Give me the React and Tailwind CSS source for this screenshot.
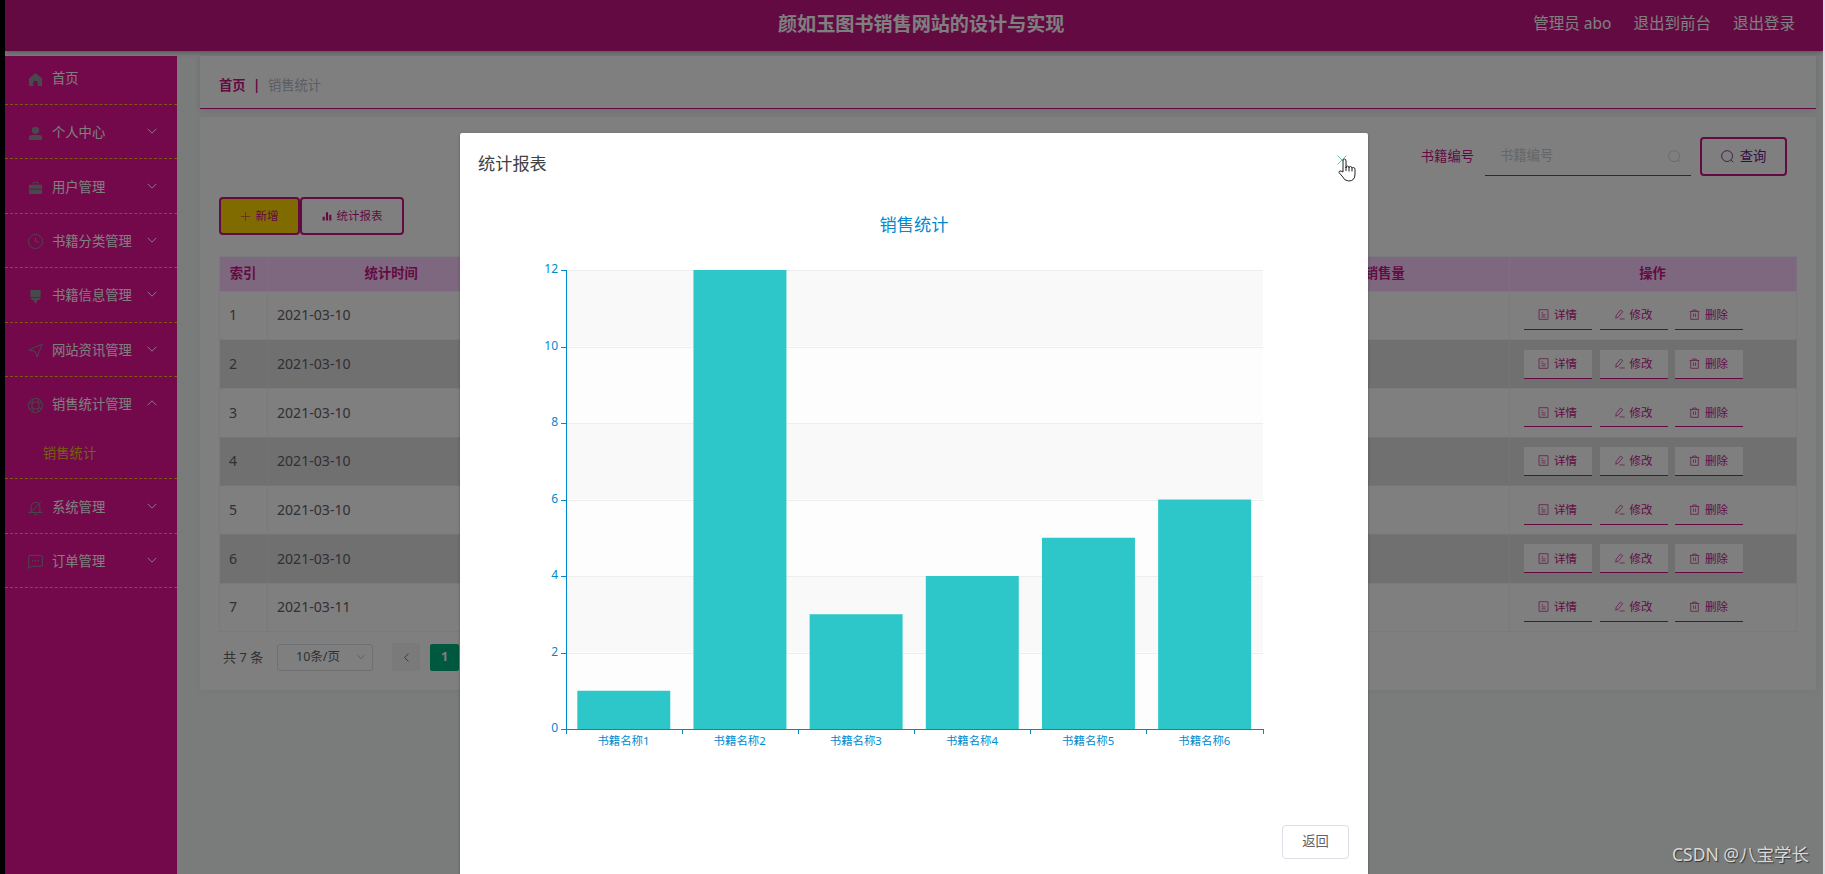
// App.jsx
import React, { useState } from 'react'

const svgProps = { viewBox: '0 0 16 16', fill: 'none', stroke: 'currentColor', strokeWidth: 1 }

const icons = {
  home: <path d="M8 1 15 7v8h-4.6v-3.4a2.4 2.4 0 0 0-4.8 0V15H1V7z" fill="currentColor" stroke="none" />,
  user: (
    <g fill="currentColor" stroke="none">
      <circle cx="8" cy="4.6" r="3.9" />
      <path d="M1 15v-2.6Q1 9.6 4 9.6h8q3 0 3 2.8V15z" />
    </g>
  ),
  box: (
    <g>
      <path d="M5.5 5V2.5h5V5" />
      <path d="M1 5h14v4.300H1zM1 10.200h14V15H1z" fill="currentColor" stroke="none" />
    </g>
  ),
  clock: (
    <g>
      <circle cx="8" cy="8" r="7.5" />
      <path d="M8 4v4.5h4" />
    </g>
  ),
  brush: (
    <g fill="currentColor" stroke="none">
      <path d="M2.500 1h11v7.500h-11zM2.500 9.300h11Q13 12 10 12l-2 4-2-4Q3 12 2.500 9.300z" />
    </g>
  ),
  send: <path d="M15 1 .8 7.500l6.600 1.300L9.800 15z" />,
  ring: (
    <g>
      <circle cx="8" cy="8" r="7.500" />
      <circle cx="8" cy="8" r="4" />
      <path d="M5.500 4.800 4.800 1.200M10.500 4.800l.7-3.600M5.500 11.200l-.7 3.600M10.500 11.200l.7 3.600M4.800 5.500 1.200 4.800M11.200 5.500l3.600-.7M4.800 10.500l-3.600.7M11.200 10.500l3.600.7" />
    </g>
  ),
  bell: <path d="M3.300 13V7.200a4.700 4.700 0 0 1 9.400 0V13M.5 13.300h15M6.500 15.500h3M2 14.500 14 1.500" />,
  chat: (
    <g>
      <path d="M2 1.500h12q1.300 0 1.300 1.300v9q0 1.300-1.300 1.300H4L.7 15.300V2.800Q.7 1.500 2 1.500z" />
      <path d="M4.300 7.300h1.400M7.300 7.300h1.400M10.300 7.300h1.400" strokeWidth="1.500" />
    </g>
  ),
  doc: <path d="M1.500 1h13v14h-13zM5 5.500h2.500M5 8.500h6M5 11.500h6" />,
  edit: <path d="m2.500 13.500.8-4.500L9.500 1.500l3.200 2.300-6.200 7.700zM8 14.500h7.500" />,
  trash: <path d="M1 3.500h14M5.500 3.500v-2h5v2M2.500 3.500V15h11V3.500M6.500 6.500v5M9.500 6.500v5" />,
  search: (
    <g>
      <circle cx="7.500" cy="7.500" r="6.700" />
      <path d="m12.200 12.200 3 3" />
    </g>
  ),
  plus: <path d="M8 0v16M0 8h16" />,
  bars: <path d="M1 9h3.400v6H1zM6.300 2h3.400v13H6.300zM11.600 6H15v9h-3.400z" fill="currentColor" stroke="none" />,
  down: <path d="m1 4.500 7 7 7-7" />,
  up: <path d="m1 11.500 7-7 7 7" />,
  left: <path d="m11.500 1-7 7 7 7" />,
  close: <path d="m1 1 14 14M15 1 1 15" />,
}

function Icon({ name, className }) {
  return (
    <svg {...svgProps} className={className}>
      {icons[name]}
    </svg>
  )
}

const menu = [
  { icon: 'user', label: '个人中心' },
  { icon: 'box', label: '用户管理' },
  { icon: 'clock', label: '书籍分类管理' },
  { icon: 'brush', label: '书籍信息管理' },
  { icon: 'send', label: '网站资讯管理' },
  { icon: 'ring', label: '销售统计管理', children: ['销售统计'] },
  { icon: 'bell', label: '系统管理' },
  { icon: 'chat', label: '订单管理' },
]

const rows = ['2021-03-10', '2021-03-10', '2021-03-10', '2021-03-10', '2021-03-10', '2021-03-10', '2021-03-11']

const actions = [
  { icon: 'doc', label: '详情' },
  { icon: 'edit', label: '修改' },
  { icon: 'trash', label: '删除' },
]

const sales = [
  { name: '书籍名称1', value: 1 },
  { name: '书籍名称2', value: 12 },
  { name: '书籍名称3', value: 3 },
  { name: '书籍名称4', value: 4 },
  { name: '书籍名称5', value: 5 },
  { name: '书籍名称6', value: 6 },
]

function Header() {
  return (
    <header className="relative flex h-[51px] shrink-0 items-center bg-[#c71585] pb-[3px] text-white shadow-[0_1px_5px_rgba(0,0,0,0.35)]">
      <div className="w-[773px]" />
      <h1 className="text-[19.1px] font-bold">颜如玉图书销售网站的设计与实现</h1>
      <div className="flex flex-1 justify-end gap-[22px] pr-7 text-[15.5px]">
        <span>管理员 abo</span>
        <span>退出到前台</span>
        <span>退出登录</span>
      </div>
    </header>
  )
}

function Sidebar({ open }) {
  return (
    <aside className="w-[172px] shrink-0 bg-[#e61294] text-[13.3px] text-white">
      <div className="flex h-[49px] items-center border-b border-dashed border-[#ffb020] pb-[3px] pl-[23px]">
        <Icon name="home" className="mt-0.5 size-[15px] text-[#909399]" />
        <span className="ml-[9px]">首页</span>
      </div>
      {menu.map((item) => (
        <div key={item.label} className="border-b border-dashed border-[#ffb020]">
          <div className="flex h-[53.4px] items-center pt-[3px] pr-[20px] pl-[23px]">
            <Icon name={item.icon} className="size-[15px] text-[#909399]" />
            <span className="ml-[9px] flex-1">{item.label}</span>
            <Icon name={item.label === open ? 'up' : 'down'} className="mb-1 size-[10px] [stroke-width:1.6]" />
          </div>
          {item.children?.map((child) => (
            <div key={child} className="flex h-[48px] items-center pl-[38px] text-[#e8c020]">
              {child}
            </div>
          ))}
        </div>
      ))}
    </aside>
  )
}

function Toolbar() {
  return (
    <>
      <div className="flex items-center justify-end pr-[10px] text-[13.3px]">
        <span className="text-[#c71585]">书籍编号</span>
        <div className="ml-[11px] flex h-[39px] w-[206px] items-center justify-between border-b border-[#c71585] pr-[10px] pl-[15px] text-[#c8cdd2]">
          <span>书籍编号</span>
          <Icon name="search" className="size-[13px]" />
        </div>
        <button className="ml-[9px] flex h-[39px] w-[87px] items-center justify-center gap-1.5 rounded-[4px] border-2 border-[#c71585] text-[#6a148c]">
          <Icon name="search" className="size-[13px]" />
          查询
        </button>
      </div>
      <div className="mt-[21px] flex text-[11.5px] text-[#c71585]">
        <button className="flex h-[38px] w-[81px] items-center justify-center gap-1.5 rounded-[4px] border-2 border-[#c71585] bg-[#ffd700]">
          <Icon name="plus" className="size-[9px]" />
          新增
        </button>
        <button className="flex h-[38px] w-[104px] items-center justify-center gap-[5px] rounded-[4px] border-2 border-[#c71585]">
          <Icon name="bars" className="size-[10px]" />
          统计报表
        </button>
      </div>
    </>
  )
}

function SalesTable() {
  return (
    <table className="mt-[21px] w-full table-fixed border-collapse text-left text-[14.100px] text-[#606266]">
      <colgroup>
        <col className="w-[48px]" />
        <col />
        <col />
        <col />
        <col />
        <col />
        <col className="w-[287px]" />
      </colgroup>
      <thead>
        <tr className="h-[34.500px] bg-[#fdd0ff] text-[13.3px] text-[#c71585]">
          {['索引', '统计时间', '', '', '', '销售量', '操作'].map((title, i) => (
            <th key={i} className="border border-[#ebeef5]/60 p-0 pt-px pr-px text-center font-bold">
              {title}
            </th>
          ))}
        </tr>
      </thead>
      <tbody>
        {rows.map((date, i) => (
          <tr key={i} className={`h-[48.7px] ${i % 2 ? 'bg-[#e0e0e0]' : ''}`}>
            <td className="border border-[#ebeef5]/60 p-0 pb-px pl-[9px]">{i + 1}</td>
            <td className="border border-[#ebeef5]/60 p-0 pb-px pl-[9px]">{date}</td>
            <td />
            <td />
            <td />
            <td className="border border-[#ebeef5]/60" />
            <td className="border border-[#ebeef5]/60 p-0 pl-[14px]">
              <div className="flex gap-[7.5px]">
                {actions.map((action) => (
                  <button
                    key={action.label}
                    className="flex h-[29px] w-[68px] items-center justify-center gap-[5px] border-b border-[#c71585] bg-white pr-px text-[11.5px] text-[#c71585]"
                  >
                    <Icon name={action.icon} className="size-[11px]" />
                    {action.label}
                  </button>
                ))}
              </div>
            </td>
          </tr>
        ))}
      </tbody>
    </table>
  )
}

function Pagination() {
  return (
    <div className="mt-[11.500px] flex h-[27px] items-center pl-1 text-[12.5px] text-[#606266]">
      <span className="w-[54px] text-[13px]">共 7 条</span>
      <div className="flex h-[27px] w-[96px] items-center justify-between rounded-[3px] border border-[#dcdfe6] pr-[7px] pl-[18px]">
        10条/页
        <Icon name="down" className="size-[8px] text-[#a0a4aa] [stroke-width:1.5]" />
      </div>
      <div className="ml-[19px] flex size-[28px] items-center justify-center rounded-[2px] bg-[#f4f4f5]">
        <Icon name="left" className="size-[9px] [stroke-width:1.5]" />
      </div>
      <div className="ml-[10px] flex h-[27px] w-[29px] items-center justify-center rounded-[2px] bg-[#00b37e] font-bold text-white">1</div>
    </div>
  )
}

function BarChart() {
  const top = 137
  const bottom = 596
  const left = 106
  const width = 697
  const step = width / sales.length
  const y = (value) => bottom - (value / 12) * (bottom - top)

  return (
    <svg width="908" height="640" viewBox="0 0 908 640" className="absolute top-0 left-0 text-[11.4px]">
      <text x="454" y="98" textAnchor="middle" fill="#008acd" className="text-[17.2px]">
        销售统计
      </text>
      {[12, 10, 8, 6, 4, 2].map((value, i) => (
        <g key={value}>
          <rect x={left} y={y(value)} width={width} height={y(value - 2) - y(value)} fill={i % 2 ? '#fdfdfd' : '#f9f9f9'} />
          <path d={`M${left} ${Math.round(y(value)) + 0.5}h${width}`} stroke="#eeeeee" />
        </g>
      ))}
      {sales.map((item, i) => (
        <g key={item.name}>
          <rect x={left + i * step + 11.3} y={y(item.value)} width={step - 23.2} height={bottom - y(item.value)} fill="#2ec7c9" />
          <text x={left + (i + 0.5) * step - 0.6} y="612" textAnchor="middle" fill="#008acd">
            {item.name}
          </text>
        </g>
      ))}
      {[0, 2, 4, 6, 8, 10, 12].map((value) => (
        <g key={value}>
          <path d={`M${left - 5} ${Math.round(y(value)) + 0.5}h5`} stroke="#008acd" />
          <text x={left - 8} y={y(value) + 3} textAnchor="end" fill="#008acd" className="text-[12px]">
            {value}
          </text>
        </g>
      ))}
      <path d={`M${left + 0.5} ${top}V${bottom}M${left} ${bottom + 0.5}h${width + 1}`} stroke="#008acd" />
      {[0, 1, 2, 3, 4, 5, 6].map((i) => (
        <path key={i} d={`M${Math.floor(left + i * step) + 0.5} ${bottom}v5`} stroke="#008acd" />
      ))}
    </svg>
  )
}

function ReportDialog({ onClose }) {
  return (
    <div className="absolute top-[133px] left-[460px] flex h-[760px] w-[908px] flex-col justify-between rounded-[2px] bg-white shadow-[0_1px_3px_rgba(0,0,0,0.3)]">
      <BarChart />
      <div className="relative flex items-start justify-between pt-[18px] pr-[21px] pl-[18px]">
        <h2 className="text-[17.2px] leading-[25px] text-[#404144]">统计报表</h2>
        <button onClick={onClose} className="mt-1">
          <Icon name="close" className="size-[10px] text-[#5fc9a3] [stroke-width:1.6]" />
        </button>
      </div>
      <div className="relative flex justify-end pr-[19px] pb-[34px]">
        <button onClick={onClose} className="h-[34px] w-[67px] rounded-[4px] border border-[#dcdfe6] text-[13.3px] text-[#606266]">
          返回
        </button>
      </div>
    </div>
  )
}

function App() {
  const [open, setOpen] = useState(true)

  return (
    <div className="relative flex h-[874px] w-[1825px] overflow-hidden bg-black pl-[5px] font-['Noto_Sans','Noto_Sans_CJK_SC',sans-serif]">
      <div className="flex flex-1 flex-col bg-[#f4f8f7]">
        <Header />
        <div className="flex flex-1 pt-[5px]">
          <Sidebar open="销售统计管理" />
          <main className="flex-1 pr-[7px] pl-[23px]">
            <div className="flex h-[53px] items-center border-b border-[#c71585] bg-white pt-2 pl-[19px] text-[13.3px] shadow-[0_1px_6px_rgba(0,0,0,0.12)]">
              <span className="font-bold text-[#c71585]">首页</span>
              <span className="mx-[7.5px] font-bold text-[#c71585]">|</span>
              <span className="text-[#b4bac6]">销售统计</span>
            </div>
            <div className="mt-2 h-[573px] bg-white pt-5 pr-[19px] pl-[19px] shadow-[0_1px_8px_rgba(0,0,0,0.05)]">
              <Toolbar />
              <SalesTable />
              <Pagination />
            </div>
          </main>
        </div>
      </div>
      {open && (
        <>
          <div className="absolute inset-0 bg-black/50" />
          <ReportDialog onClose={() => setOpen(false)} />
        </>
      )}
      <div className="relative w-[2px] bg-[#e2dfe2]" />
      <svg viewBox="0 0 18 24" className="absolute top-[158px] left-[1338px] h-[24px] w-[18px]">
        <path
          d="M5 14V3Q5 1 6.500 1T8 3v7q0-2 1.500-2t1.500 2q0-1.500 1.500-1.500T14 10.500q0-1 1.500-1t1.500 2V16q0 7-6.500 7Q6.500 23 4 18L1 14.500q0-2 2-1.500z"
          fill="#ffffff"
          stroke="#222222"
        />
        <path d="M8 9v4M11 10v3.500M14 10.500v3" stroke="#222222" />
      </svg>
      <span className="absolute right-[16px] bottom-[7px] text-[17.5px] text-[#d8d8d8] [text-shadow:1px_1px_1px_#333]">CSDN @八宝学长</span>
    </div>
  )
}

export default App
